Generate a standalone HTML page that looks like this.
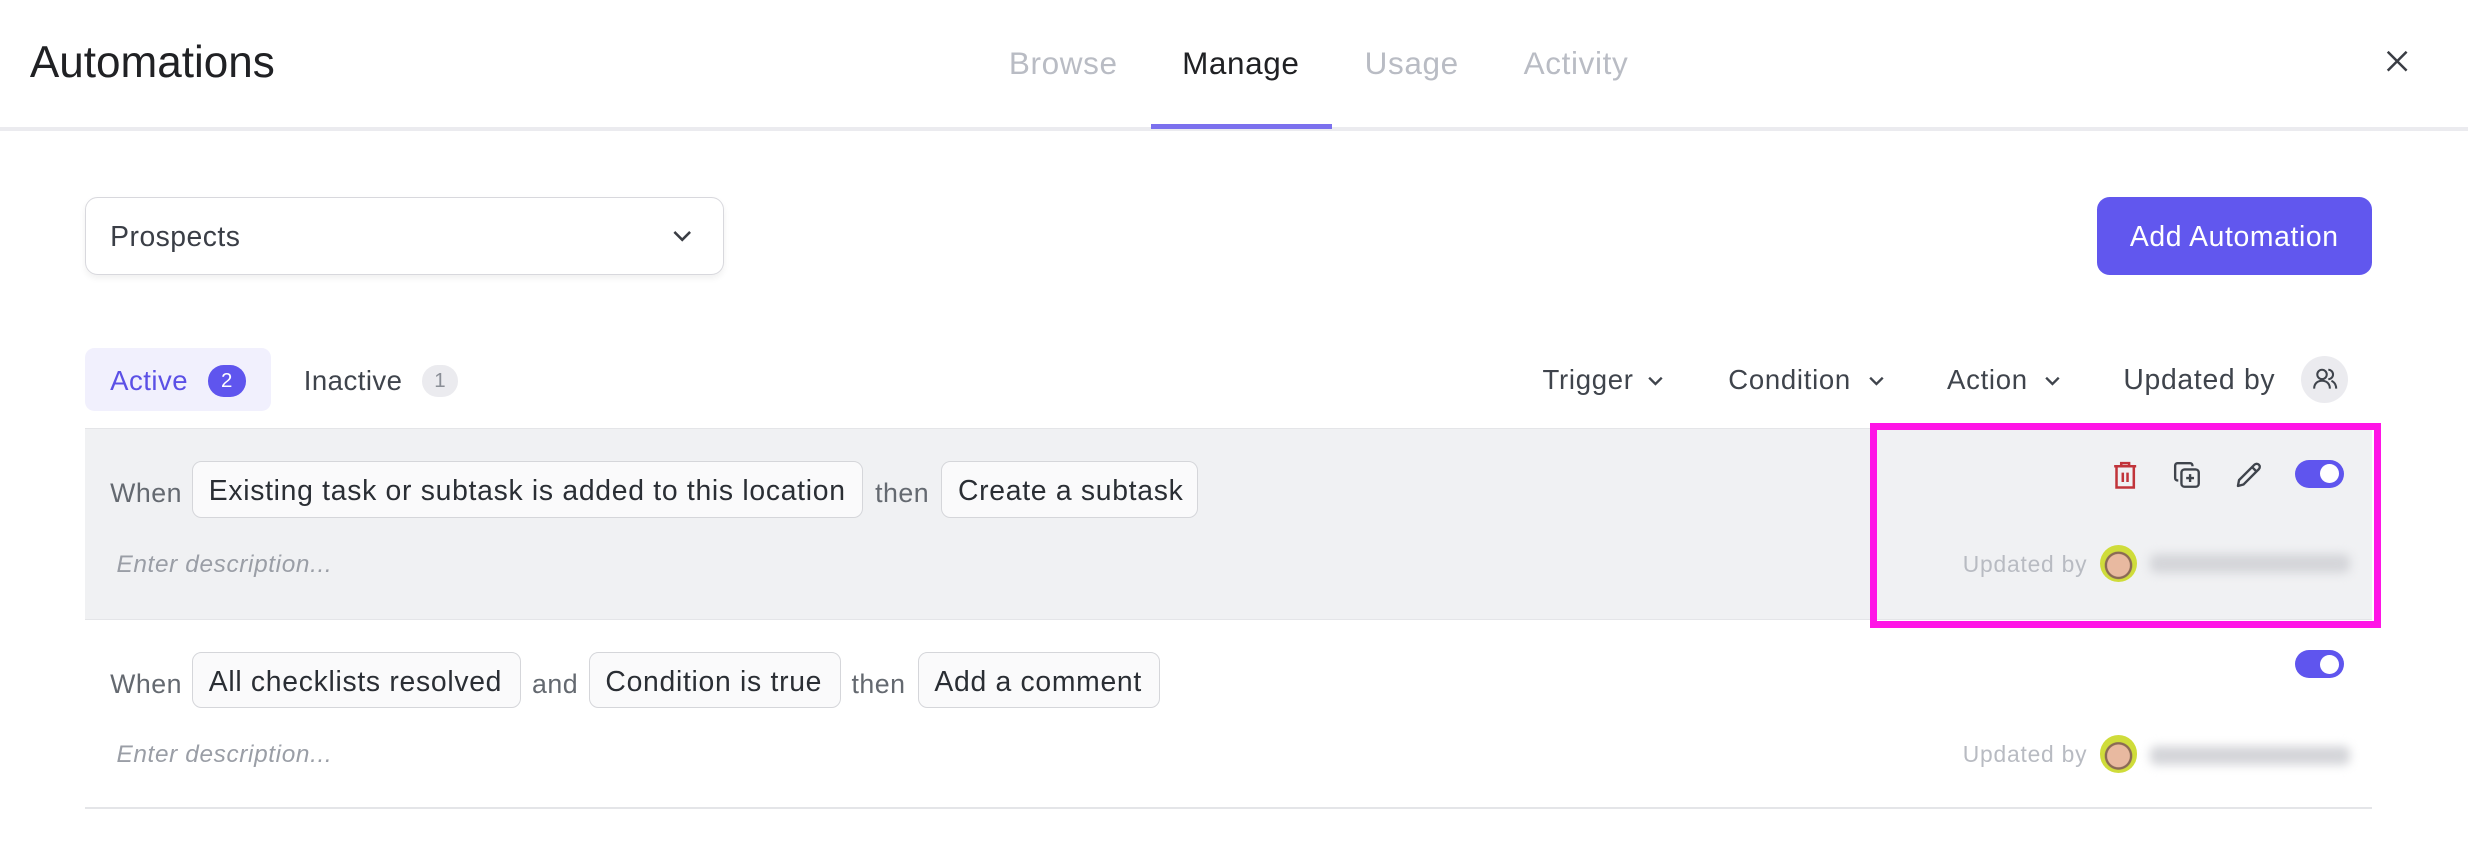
<!DOCTYPE html>
<html><head><style>
html,body{margin:0;padding:0;background:#fff;overflow:hidden}
body{width:2468px;height:866px}
#w{position:relative;width:1568px;height:550px;zoom:1.574;font-family:"Liberation Sans",sans-serif;color:#2a2e34}
.a{position:absolute;white-space:nowrap}
.tab{font-size:20px;letter-spacing:0.4px;color:#b9bcc4;top:29px}
.chip{position:absolute;white-space:nowrap;overflow:hidden;height:36px;border:1px solid #d5d6da;border-radius:6px;background:#fafafb;font-size:18px;letter-spacing:0.45px;line-height:37px;padding:0 10px;box-sizing:border-box;color:#2a2e34}
.w{font-size:17px;letter-spacing:0.3px;color:#646970}
.desc{font-size:15.5px;letter-spacing:0.4px;font-style:italic;color:#9a9ea6}
.upd{font-size:14.5px;letter-spacing:0.5px;color:#b8bbc2}
.tog{position:absolute;width:31px;height:18px;border-radius:9px;background:#5f55ee}
.tog:after{content:"";position:absolute;right:3px;top:3px;width:12px;height:12px;border-radius:50%;background:#fff}
.av{position:absolute;width:24px;height:24px;border-radius:50%;background:radial-gradient(circle at 50% 55%,#e8b9a0 0 7px,#8a6a55 7.5px 8.5px,#cfdc3a 9px)}
.blur{position:absolute;width:127px;height:12px;background:#d4d5d9;filter:blur(3px);border-radius:4px}
.flt{font-size:17.5px;letter-spacing:0.45px;color:#3f444c;top:231px}
</style></head><body><div id="w">
<div class="a" style="left:19px;top:24px;font-size:28px;color:#202124">Automations</div>
<div class="a tab" style="left:641px">Browse</div>
<div class="a tab" style="left:751px;color:#202124">Manage</div>
<div class="a tab" style="left:867px">Usage</div>
<div class="a tab" style="left:968px">Activity</div>
<div class="a" style="left:0;top:81px;width:1568px;height:2px;background:#ebebef"></div>
<div class="a" style="left:731px;top:79px;width:115px;height:3px;background:#7b70ee"></div>
<svg class="a" style="left:1514px;top:30px" width="18" height="18" viewBox="0 0 18 18"><path d="M3 3L15 15M15 3L3 15" stroke="#3a3d44" stroke-width="1.6"/></svg>

<div class="a" style="left:54px;top:125px;width:406px;height:50px;border:1px solid #d8d8dd;border-radius:8px;box-sizing:border-box;box-shadow:0 2px 4px rgba(0,0,0,.06)"></div>
<div class="a" style="left:70px;top:125px;height:50px;line-height:51px;font-size:18px;letter-spacing:0.3px;color:#3a3e46">Prospects</div>
<svg class="a" style="left:427px;top:145px" width="13" height="10" viewBox="0 0 13 10"><path d="M1.5 2.5L6.5 7.5L11.5 2.5" stroke="#3a3d44" stroke-width="1.6" fill="none"/></svg>
<div class="a" style="left:1332px;top:125px;width:175px;height:50px;border-radius:8px;background:#6157ee;color:#fff;font-size:18px;letter-spacing:0.4px;line-height:51px;text-align:center">Add Automation</div>

<div class="a" style="left:54px;top:221px;width:118px;height:40px;border-radius:6px;background:#f1f0fd"></div>
<div class="a" style="left:70px;top:232px;font-size:17.5px;letter-spacing:0.3px;color:#5b50e6">Active</div>
<div class="a" style="left:132px;top:232px;width:24px;height:20px;border-radius:10px;background:#5f55ee;color:#fff;font-size:13px;line-height:20px;text-align:center">2</div>
<div class="a" style="left:193px;top:232px;font-size:17.5px;letter-spacing:0.3px;color:#3f444c">Inactive</div>
<div class="a" style="left:268px;top:232px;width:23px;height:20px;border-radius:10px;background:#ebebef;color:#8a8e96;font-size:13px;line-height:20px;text-align:center">1</div>

<div class="a flt" style="left:980px">Trigger</div>
<div class="a flt" style="left:1098px">Condition</div>
<div class="a flt" style="left:1237px">Action</div>
<div class="a flt" style="left:1349px;font-size:18px">Updated by</div>
<svg class="a" style="left:1046px;top:237px" width="12" height="10"><path d="M2 3L6 7L10 3" stroke="#3f444c" stroke-width="1.5" fill="none"/></svg>
<svg class="a" style="left:1186px;top:237px" width="12" height="10"><path d="M2 3L6 7L10 3" stroke="#3f444c" stroke-width="1.5" fill="none"/></svg>
<svg class="a" style="left:1298px;top:237px" width="12" height="10"><path d="M2 3L6 7L10 3" stroke="#3f444c" stroke-width="1.5" fill="none"/></svg>
<div class="a" style="left:1462px;top:226px;width:30px;height:30px;border-radius:50%;background:#ebebef"></div>
<svg class="a" style="left:1468px;top:232px" width="18" height="18" viewBox="0 0 18 18"><circle cx="7" cy="6" r="3" stroke="#3f444c" stroke-width="1.3" fill="none"/><path d="M2 15c0-3 2-5 5-5s5 2 5 5M11 3a3 3 0 0 1 0 6M13 10c2 1 3 3 3 5" stroke="#3f444c" stroke-width="1.3" fill="none"/></svg>

<!-- row 1 -->
<div class="a" style="left:54px;top:272px;width:1453px;height:121px;background:#f0f1f3;border-top:1px solid #e4e5e8"></div>
<div class="a w" style="left:70px;top:304px">When</div>
<div class="chip" style="left:122px;top:293px;width:426px">Existing task or subtask is added to this location</div>
<div class="a w" style="left:556px;top:304px">then</div>
<div class="chip" style="left:598px;top:293px;width:163px">Create a subtask</div>
<div class="a desc" style="left:74px;top:350px">Enter description...</div>
<svg class="a" style="left:1341px;top:292px" width="18" height="19" viewBox="0 0 18 19"><path d="M2 4H16M6.5 4V2H11.5V4M3.5 4.5V17.5H14.5V4.5M7.5 8V14M10.5 8V14" stroke="#c1343a" stroke-width="1.6" fill="none"/></svg>
<svg class="a" style="left:1380px;top:292px" width="19" height="19" viewBox="0 0 19 19"><path d="M4 13H3.5A1.5 1.5 0 0 1 2 11.5V3.5A1.5 1.5 0 0 1 3.5 2H11.5A1.5 1.5 0 0 1 13 3.5V4" stroke="#3f444c" stroke-width="1.5" fill="none"/><rect x="6" y="6" width="11" height="11" rx="2" stroke="#3f444c" stroke-width="1.5" fill="none"/><path d="M11.5 9V14M9 11.5H14" stroke="#3f444c" stroke-width="1.5"/></svg>
<svg class="a" style="left:1419px;top:292px" width="19" height="19" viewBox="0 0 19 19"><path d="M2.5 16.5L3.2 12.8L13 3A1.8 1.8 0 0 1 15.8 5.8L6 15.6Z M11.5 4.5L14.3 7.3" stroke="#3f444c" stroke-width="1.5" fill="none" stroke-linejoin="round"/></svg>
<div class="tog" style="left:1458px;top:292px"></div>
<div class="a upd" style="left:1247px;top:350px">Updated by</div>
<div class="av" style="left:1334px;top:346px"></div>
<div class="blur" style="left:1366px;top:352px"></div>

<!-- row 2 -->
<div class="a" style="left:54px;top:393px;width:1453px;height:1px;background:#e4e5e8"></div>
<div class="a w" style="left:70px;top:425px">When</div>
<div class="chip" style="left:122px;top:414px;width:209px">All checklists resolved</div>
<div class="a w" style="left:338px;top:425px">and</div>
<div class="chip" style="left:374px;top:414px;width:160px">Condition is true</div>
<div class="a w" style="left:541px;top:425px">then</div>
<div class="chip" style="left:583px;top:414px;width:154px">Add a comment</div>
<div class="a desc" style="left:74px;top:471px">Enter description...</div>
<div class="tog" style="left:1458px;top:413px"></div>
<div class="a upd" style="left:1247px;top:471px">Updated by</div>
<div class="av" style="left:1334px;top:467px"></div>
<div class="blur" style="left:1366px;top:474px"></div>
<div class="a" style="left:54px;top:513px;width:1453px;height:1px;background:#e4e5e8"></div>

<!-- highlight -->
<div class="a" style="left:1188px;top:269px;width:325px;height:130px;border:4.5px solid #ff14e6;box-sizing:border-box"></div>
</div></body></html>
